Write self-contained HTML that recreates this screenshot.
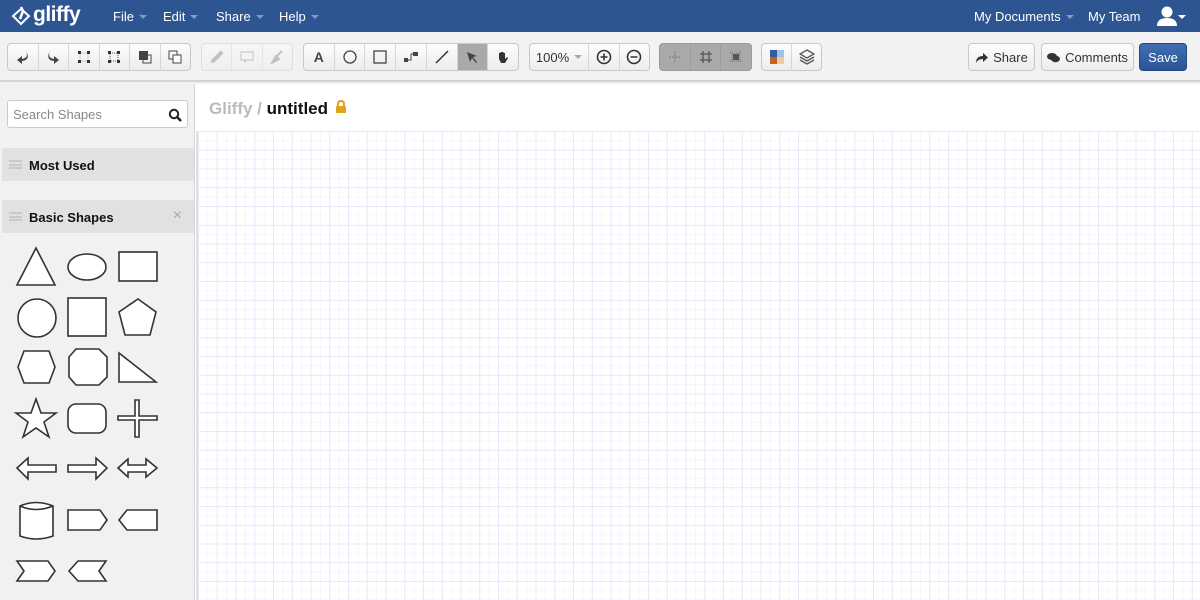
<!DOCTYPE html>
<html><head><meta charset="utf-8"><style>
*{box-sizing:border-box;margin:0;padding:0}
body{width:1200px;height:600px;overflow:hidden;font-family:"Liberation Sans",Arial,sans-serif;background:#f1f1f1;position:relative}
#hdr{position:absolute;left:0;top:0;width:1200px;height:32px;background:#2c5592;color:#fff;font-size:13px}
#hdr .m{position:absolute;top:9px}
.caret{display:inline-block;width:0;height:0;border-left:4px solid transparent;border-right:4px solid transparent;border-top:4px solid #7f9cc6;margin-left:5px;vertical-align:2px}
#tb{position:absolute;left:0;top:32px;width:1200px;height:50px;background:#f2f2f2;border-bottom:2px solid #d3d3d3}
.g{position:absolute;top:11px;height:28px;border:1px solid #c8c8c8;border-radius:4px;background:linear-gradient(#fdfdfd,#ececec);display:flex;overflow:hidden}
.g .b{flex:1;border-right:1px solid #d6d6d6;display:flex;align-items:center;justify-content:center}
.g .b:last-child{border-right:none}
.g.dis{opacity:.45}
.g.dark{background:#a9a9a9;border-color:#9a9a9a}
.g.dark .b{border-right-color:#9d9d9d}
.btn{position:absolute;top:11px;height:28px;border:1px solid #c8c8c8;border-radius:4px;background:linear-gradient(#fdfdfd,#ececec);font-size:13px;color:#333;display:flex;align-items:center;justify-content:center;gap:5px}
#side{position:absolute;left:0;top:84px;width:195px;height:516px;background:#f1f1f1;border-right:1px solid #d6d6d6}
#search{position:absolute;left:7px;top:16px;width:181px;height:28px;background:#fff;border:1px solid #ccc;border-radius:3px;font-size:13px;color:#888;padding:6px 5px}
.sec{position:absolute;left:2px;width:192px;height:33px;background:#e1e1e1;font-size:13px;font-weight:bold;color:#111;padding:10px 0 0 27px}
.sec .h{position:absolute;left:7px;top:12px;width:13px;height:9px;border-top:2px solid #c9c9c9;border-bottom:2px solid #c9c9c9}
.sec .h:after{content:"";position:absolute;left:0;top:1.5px;width:13px;height:2px;background:#c9c9c9}
#canvas{position:absolute;left:195px;top:84px;width:1005px;height:516px;background:#fff}
#grid{position:absolute;left:1px;top:47px;width:1004px;height:469px;
background-image:
linear-gradient(90deg,#e8e8fa 1px,transparent 1px),
linear-gradient(#e8e8fa 1px,transparent 1px),
linear-gradient(90deg,#f5f5fd 1px,transparent 1px),
linear-gradient(#f5f5fd 1px,transparent 1px);
background-size:18.75px 18.75px,18.75px 18.75px,9.375px 9.375px,9.375px 9.375px;border-left:2px solid #e0e0e0}
#title{position:absolute;left:14px;top:15px;font-size:17px;font-weight:bold;color:#bbb}
#title b{color:#111}
</style></head><body>
<div id="hdr">
 <svg style="position:absolute;left:10px;top:5px" width="22" height="22" viewBox="0 0 22 22"><path d="M3 11 L11 4 L19 11 L11 19 Z" fill="none" stroke="#fff" stroke-width="2"/><path d="M11 2 L13 6 L10 14" stroke="#fff" stroke-width="2.5" fill="none"/></svg>
 <span style="position:absolute;left:33px;top:3px;font-size:21px;font-weight:bold;letter-spacing:-0.5px">gliffy</span>
 <span class="m" style="left:113px">File<span class="caret"></span></span>
 <span class="m" style="left:163px">Edit<span class="caret"></span></span>
 <span class="m" style="left:216px">Share<span class="caret"></span></span>
 <span class="m" style="left:279px">Help<span class="caret"></span></span>
 <span class="m" style="left:974px">My Documents<span class="caret"></span></span>
 <span class="m" style="left:1088px">My Team</span>
 <svg style="position:absolute;left:1156px;top:5px" width="22" height="21" viewBox="0 0 22 21"><circle cx="11" cy="7" r="5.5" fill="#fff"/><path d="M1 21 Q1 13 11 13 Q21 13 21 21Z" fill="#fff"/></svg>
 <span class="caret" style="position:absolute;left:1178px;top:15px;border-top-color:#fff;margin:0"></span>
</div>
<div id="tb">
 <div class="g" style="left:7px;width:184px">
  <div class="b"><svg width="14" height="14" viewBox="0 0 14 14"><path d="M10 1 Q13 8 6 9 L6 6 L1 10 L6 14 L6 11 Q15 10 10 1Z" fill="#444"/></svg></div>
  <div class="b"><svg width="14" height="14" viewBox="0 0 14 14"><path d="M4 1 Q1 8 8 9 L8 6 L13 10 L8 14 L8 11 Q-1 10 4 1Z" fill="#444"/></svg></div>
  <div class="b"><svg width="14" height="14"><rect x="3" y="3" width="8" height="8" fill="none" stroke="#ccc"/><g fill="#333"><rect x="1" y="1" width="3" height="3"/><rect x="10" y="1" width="3" height="3"/><rect x="1" y="10" width="3" height="3"/><rect x="10" y="10" width="3" height="3"/></g></svg></div>
  <div class="b"><svg width="14" height="14"><rect x="3" y="3" width="8" height="8" fill="none" stroke="#555" stroke-dasharray="1 1"/><g fill="#333"><rect x="1" y="1" width="3" height="3"/><rect x="10" y="1" width="3" height="3"/><rect x="1" y="10" width="3" height="3"/><rect x="10" y="10" width="3" height="3"/></g></svg></div>
  <div class="b"><svg width="14" height="14"><rect x="1" y="1" width="9" height="9" fill="#444"/><rect x="5" y="5" width="8" height="8" fill="none" stroke="#444"/></svg></div>
  <div class="b"><svg width="14" height="14"><rect x="1" y="1" width="8" height="8" fill="none" stroke="#444"/><rect x="5" y="5" width="8" height="8" fill="#fff" stroke="#444"/></svg></div>
 </div>
 <div class="g dis" style="left:201px;width:92px">
  <div class="b"><svg width="14" height="14"><path d="M3 11 L11 3" stroke="#888" stroke-width="4" stroke-linecap="round"/></svg></div>
  <div class="b"><svg width="14" height="14"><rect x="1" y="2" width="12" height="8" fill="none" stroke="#888"/><path d="M4 10 L4 13 L7 10" fill="#888"/></svg></div>
  <div class="b"><svg width="14" height="14"><path d="M2 13 L6 6 L9 9Z M7 6 L12 1" stroke="#888" stroke-width="2" fill="#888"/></svg></div>
 </div>
 <div class="g" style="left:303px;width:216px">
  <div class="b" style="font-weight:bold;font-size:14px;color:#444">A</div>
  <div class="b"><svg width="14" height="14"><circle cx="7" cy="7" r="6" fill="none" stroke="#444" stroke-width="1.3"/></svg></div>
  <div class="b"><svg width="14" height="14"><rect x="1" y="1" width="12" height="12" fill="none" stroke="#444" stroke-width="1.3"/></svg></div>
  <div class="b"><svg width="14" height="14"><rect x="0" y="8" width="4" height="4" fill="#444"/><rect x="9" y="2" width="5" height="4" fill="#444"/><path d="M4 10 H7 V4 H9" stroke="#444" fill="none"/></svg></div>
  <div class="b"><svg width="14" height="14"><path d="M1 13 L13 1" stroke="#333" stroke-width="1.5"/></svg></div>
  <div class="b" style="background:#a9a9a9"><svg width="14" height="14"><path d="M2 2 L12 6 L8 7 L12 12 L11 13 L7 8 L5 12Z" fill="#444"/></svg></div>
  <div class="b"><svg width="14" height="14"><path d="M3 7 V3 h1.5 V7 V2 h1.5 V7 V2 h1.5 V7 V3 h1.5 V9 L11 7 L12 8 L9 13 H5 L3 9Z" fill="#333"/></svg></div>
 </div>
 <div class="g" style="left:529px;width:121px">
  <div class="b" style="flex:0 0 59px;font-size:13px;color:#333">100%<span class="caret" style="border-top-color:#aaa"></span></div>
  <div class="b"><svg width="16" height="16"><circle cx="8" cy="8" r="6.5" fill="none" stroke="#333" stroke-width="1.6"/><path d="M4.5 8 H11.5 M8 4.5 V11.5" stroke="#333" stroke-width="1.6"/></svg></div>
  <div class="b"><svg width="16" height="16"><circle cx="8" cy="8" r="6.5" fill="none" stroke="#333" stroke-width="1.6"/><path d="M4.5 8 H11.5" stroke="#333" stroke-width="1.6"/></svg></div>
 </div>
 <div class="g dark" style="left:659px;width:93px">
  <div class="b"><svg width="14" height="14"><path d="M7 1 V13 M1 7 H13" stroke="#777" stroke-dasharray="2 1"/></svg></div>
  <div class="b"><svg width="14" height="14"><path d="M4 1 V13 M10 1 V13 M1 4 H13 M1 10 H13" stroke="#555" stroke-width="1.3"/></svg></div>
  <div class="b"><svg width="14" height="14"><path d="M3 1 V13 M11 1 V13 M1 3 H13 M1 11 H13" stroke="#777" stroke-dasharray="1 1"/><rect x="4" y="4" width="6" height="6" fill="#555"/></svg></div>
 </div>
 <div class="g" style="left:761px;width:61px">
  <div class="b"><svg width="16" height="16"><rect x="1" y="1" width="7" height="7" fill="#2d5fa0"/><rect x="8" y="1" width="7" height="7" fill="#9dc3e6"/><rect x="1" y="8" width="7" height="7" fill="#c0651e"/><rect x="8" y="8" width="7" height="7" fill="#f0c9a0"/></svg></div>
  <div class="b"><svg width="16" height="16"><path d="M8 1 L15 5 L8 9 L1 5Z" fill="none" stroke="#555" stroke-width="1.3"/><path d="M1 8 L8 12 L15 8 M1 11 L8 15 L15 11" fill="none" stroke="#555" stroke-width="1.3"/></svg></div>
 </div>
 <div class="btn" style="left:968px;width:67px"><svg width="13" height="11"><path d="M1 11 Q1 4 8 4 V1 L13 5.5 L8 10 V7 Q3 7 1 11Z" fill="#333"/></svg>Share</div>
 <div class="btn" style="left:1041px;width:93px"><svg width="13" height="11"><ellipse cx="5" cy="4.5" rx="5" ry="3.5" fill="#333"/><ellipse cx="8.5" cy="7" rx="4.5" ry="3.2" fill="#333"/></svg>Comments</div>
 <div class="btn" style="left:1139px;width:48px;background:linear-gradient(#3f6fb4,#2b5595);border-color:#25497f;color:#fff">Save</div>
</div>
<div id="side">
 <div id="search">Search Shapes
  <svg style="position:absolute;right:5px;top:7px" width="14" height="14"><circle cx="6" cy="6" r="4.2" fill="none" stroke="#222" stroke-width="2"/><path d="M9 9 L13 13" stroke="#222" stroke-width="2.5"/></svg></div>
 <div class="sec" style="top:64px"><span class="h"></span>Most Used</div>
 <div class="sec" style="top:116px"><span class="h"></span>Basic Shapes<span style="position:absolute;right:12px;top:7px;color:#aaa;font-weight:normal;font-size:16px">×</span></div>
 <svg style="position:absolute;left:0;top:151px" width="194" height="365" viewBox="0 235 194 365" fill="#fff" stroke="#333" stroke-width="1.6">
  <path d="M36 248 L55 285 L17 285Z"/>
  <ellipse cx="87" cy="267" rx="19" ry="13"/>
  <rect x="119" y="252" width="38" height="29"/>
  <circle cx="37" cy="318" r="19"/>
  <rect x="68" y="298" width="38" height="38"/>
  <path d="M138 299 L156 312 L150 335 L125 335 L119 312Z"/>
  <path d="M24 351 L49 351 L55 367 L49 383 L24 383 L18 367Z"/>
  <path d="M76 349 L99 349 L107 357 L107 377 L99 385 L76 385 L69 377 L69 357Z"/>
  <path d="M119 353 L119 382 L156 382Z"/>
  <path d="M36 399 L41 413 L56 413 L44 422 L49 437 L36 428 L23 437 L28 422 L16 413 L31 413Z"/>
  <rect x="68" y="404" width="38" height="29" rx="8"/>
  <path d="M135 400 H139 V416 H157 V420 H139 V437 H135 V420 H118 V416 H135Z"/>
  <path d="M17 468 L28 458 L28 465 L56 465 L56 472 L28 472 L28 479Z"/>
  <path d="M68 465 L96 465 L96 458 L107 468 L96 479 L96 472 L68 472Z"/>
  <path d="M118 468 L128 459 L128 465 L146 465 L146 459 L157 468 L146 477 L146 472 L128 472 L128 477Z"/>
  <path d="M20 506 Q36 499 53 506 V536 Q36 542 20 536Z"/><path d="M20 506 Q36 513 53 506" fill="none"/>
  <path d="M68 510 L100 510 L107 520 L100 530 L68 530Z"/>
  <path d="M127 510 L157 510 L157 530 L127 530 L119 520Z"/>
  <path d="M17 561 L48 561 L55 571 L48 581 L17 581 L24 571Z"/>
  <path d="M78 561 L106 561 L99 571 L106 581 L78 581 L69 571Z"/>
 </svg>
</div>
<div id="canvas">
 <div id="title">Gliffy / <b>untitled</b>
  <svg style="position:absolute;left:126px;top:1px" width="12" height="14"><path d="M3 6 V4 Q3 1 6 1 Q9 1 9 4 V6" fill="none" stroke="#e0a21c" stroke-width="2"/><rect x="1" y="6" width="10" height="7" rx="1" fill="#e0a21c"/></svg></div>
 <div id="grid"></div>
</div>
</body></html>
